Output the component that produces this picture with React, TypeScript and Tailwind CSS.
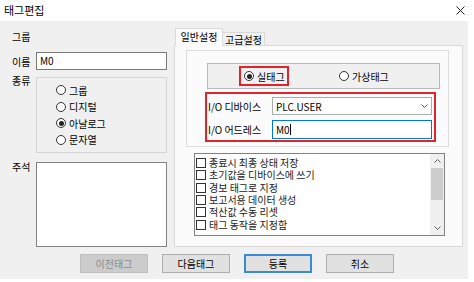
import React from 'react'

const options = [
  '종료시 최종 상태 저장',
  '초기값을 디바이스에 쓰기',
  '경보 태그로 지정',
  '보고서용 데이터 생성',
  '적산값 수동 리셋',
  '태그 동작을 지정함',
]

function Radio({ checked, label }: { checked?: boolean; label: string }) {
  return (
    <div className="flex items-center gap-[3px]">
      <span className="w-[10px] h-[10px] rounded-full border border-[#333] bg-white flex items-center justify-center">
        {checked && <span className="w-[5px] h-[5px] rounded-full bg-[#222]" />}
      </span>
      <span>{label}</span>
    </div>
  )
}

function Button({ label, disabled, primary }: { label: string; disabled?: boolean; primary?: boolean }) {
  return (
    <div
      className={
        disabled
          ? 'w-[68px] h-[19px] flex items-center justify-center border border-[#bfbfbf] bg-[#cccccc] text-[#8a8a8a]'
          : primary
            ? 'w-[68px] h-[19px] flex items-center justify-center border-2 border-[#3a8ad8] bg-[#e1e1e1]'
            : 'w-[68px] h-[19px] flex items-center justify-center border border-[#adadad] bg-[#e1e1e1]'
      }
    >
      {label}
    </div>
  )
}

export default function App() {
  return (
    <div className="w-[474px] h-[282px] bg-white overflow-hidden text-[10px] text-black font-['Noto_Sans_CJK_KR','Liberation_Sans',sans-serif]">
      {/* 타이틀 바 */}
      <div className="w-[468px] h-[21px] flex items-center justify-between pl-[4px] pr-[2px]">
        <span className="text-[11px]">태그편집</span>
        <svg width="9" height="9" viewBox="0 0 9 9" className="mr-[1px]">
          <path d="M0.5 0.5 L8.5 8.5 M8.5 0.5 L0.5 8.5" stroke="#222" strokeWidth="1" />
        </svg>
      </div>

      <div className="w-[468px] h-[258px] bg-[#f0f0f0] flex flex-col">
        <div className="flex">
          {/* 왼쪽 */}
          <div className="ml-[12px] w-[155px] pt-[9px] flex flex-col">
            <div className="h-[14px] leading-[14px]">그룹</div>
            <div className="mt-[8px] flex items-center h-[18px]">
              <span className="w-[24px]">이름</span>
              <div className="w-[131px] h-[18px] bg-white border border-[#7a7a7a] px-[3px] leading-[16px]">M0</div>
            </div>
            <div className="mt-[7px] flex items-start">
              <span className="w-[24px] leading-[14px] -mt-[3px]">종류</span>
              <div className="w-[131px] h-[76px] border border-[#d5d5d5] pl-[19px] pt-[4px] flex flex-col">
                <div className="h-[16.5px] flex items-center"><Radio label="그룹" /></div>
                <div className="h-[16.5px] flex items-center"><Radio label="디지털" /></div>
                <div className="h-[16.5px] flex items-center"><Radio checked label="아날로그" /></div>
                <div className="h-[16.5px] flex items-center"><Radio label="문자열" /></div>
              </div>
            </div>
            <div className="mt-[9px] flex items-start">
              <span className="w-[24px] leading-[14px] -mt-[2px]">주석</span>
              <div className="w-[131px] h-[85px] bg-white border border-[#828282]" />
            </div>
          </div>

          {/* 오른쪽 탭 */}
          <div className="ml-[7px] w-[289px] pt-[7px] flex flex-col">
            <div className="h-[17px] flex items-end">
              <div className="relative z-10 ml-[1px] w-[48px] h-[18px] -mb-px border-x border-t border-[#d9d9d9] bg-[#fbfbfb] flex items-center justify-center pb-[2px]">
                일반설정
              </div>
              <div className="w-[42px] h-[13px] border-t border-r border-[#d9d9d9] bg-[#f0f0f0] flex items-center justify-center">
                고급설정
              </div>
            </div>
            <div className="h-[202px] border border-[#d9d9d9] bg-[#fbfbfb] flex flex-col">
              <div className="mt-[4px] ml-[11px] w-[263px] h-[97px] border border-[#dcdcdc] flex flex-col">
                <div className="mt-[12px] ml-[20px] w-[233px] h-[26px] border border-[#b9b9b9] bg-[#f0f0f0] flex items-center">
                  <div className="ml-[31px] w-[50px] h-[20px] border-2 border-[#e0242e] pl-[3px] flex items-center">
                    <Radio checked label="실태그" />
                  </div>
                  <div className="ml-[50px]">
                    <Radio label="가상태그" />
                  </div>
                </div>
                <div className="mt-[3px] ml-[18px] w-[231px] h-[50px] border-2 border-[#e0242e] flex flex-col">
                  <div className="mt-[3px] flex items-center h-[18px]">
                    <span className="w-[65px] pl-[1px]">I/O 디바이스</span>
                    <div className="w-[160px] h-[18px] bg-white border border-[#acacac] flex items-center justify-between px-[3px]">
                      <span>PLC.USER</span>
                      <svg width="7" height="4" viewBox="0 0 7 4">
                        <path d="M0.5 0.5 L3.5 3.5 L6.5 0.5" stroke="#555" strokeWidth="1" fill="none" />
                      </svg>
                    </div>
                  </div>
                  <div className="mt-[5px] flex items-center h-[19px]">
                    <span className="w-[65px] pl-[1px]">I/O 어드레스</span>
                    <div className="w-[160px] h-[19px] bg-white border border-[#0078d7] flex items-center px-[3px]">
                      <span>M0</span>
                      <span className="w-px h-[11px] bg-black" />
                    </div>
                  </div>
                </div>
              </div>

              <div className="mt-[6px] ml-[19px] w-[251px] h-[83px] border border-[#828282] bg-white flex">
                <div className="flex-1 pt-[3px] pl-px flex flex-col">
                  {options.map((o) => (
                    <div key={o} className="h-[12.3px] flex items-center gap-[3px] text-[#222]">
                      <span className="w-[10px] h-[10px] border border-[#333] bg-white" />
                      <span className="leading-[12px]">{o}</span>
                    </div>
                  ))}
                </div>
                {/* 스크롤바 */}
                <div className="w-[14px] bg-[#f0f0f0] flex flex-col items-center">
                  <div className="h-[14px] flex items-center justify-center">
                    <svg width="7" height="4" viewBox="0 0 7 4">
                      <path d="M0.5 3.5 L3.5 0.5 L6.5 3.5" stroke="#606060" strokeWidth="1" fill="none" />
                    </svg>
                  </div>
                  <div className="w-[12px] h-[32px] bg-[#cdcdcd]" />
                  <div className="flex-1" />
                  <div className="h-[14px] flex items-center justify-center">
                    <svg width="7" height="4" viewBox="0 0 7 4">
                      <path d="M0.5 0.5 L3.5 3.5 L6.5 0.5" stroke="#606060" strokeWidth="1" fill="none" />
                    </svg>
                  </div>
                </div>
              </div>
            </div>
          </div>
        </div>

        {/* 하단 버튼 */}
        <div className="mt-[7px] ml-[80px] flex gap-[14px]">
          <Button label="이전태그" disabled />
          <Button label="다음태그" />
          <Button label="등록" primary />
          <Button label="취소" />
        </div>
      </div>
    </div>
  )
}
